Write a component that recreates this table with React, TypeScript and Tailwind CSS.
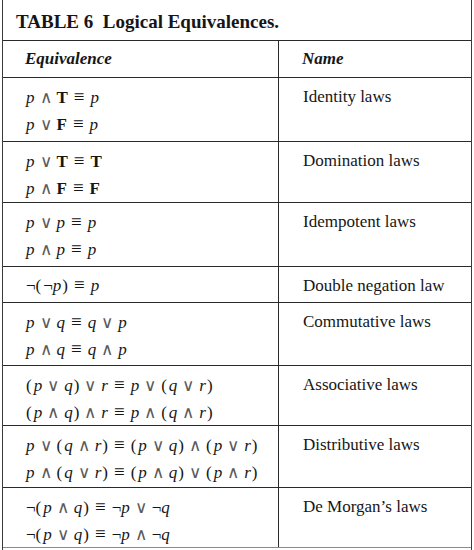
import React from 'react';

// Rows of the table: two formulas (or one) and a law name, with the row height from the scan
const rows = [
  { lines: ['p ∧ T ≡ p', 'p ∨ F ≡ p'], name: 'Identity laws', h: 'h-[64px]' },
  { lines: ['p ∨ T ≡ T', 'p ∧ F ≡ F'], name: 'Domination laws', h: 'h-[61px]' },
  { lines: ['p ∨ p ≡ p', 'p ∧ p ≡ p'], name: 'Idempotent laws', h: 'h-[64px]' },
  { lines: ['¬(¬p) ≡ p'], name: 'Double negation law', h: 'h-[36px]' },
  { lines: ['p ∨ q ≡ q ∨ p', 'p ∧ q ≡ q ∧ p'], name: 'Commutative laws', h: 'h-[63px]' },
  { lines: ['(p ∨ q) ∨ r ≡ p ∨ (q ∨ r)', '(p ∧ q) ∧ r ≡ p ∧ (q ∧ r)'], name: 'Associative laws', h: 'h-[60px]' },
  { lines: ['p ∨ (q ∧ r) ≡ (p ∨ q) ∧ (p ∨ r)', 'p ∧ (q ∨ r) ≡ (p ∧ q) ∨ (p ∧ r)'], name: 'Distributive laws', h: 'h-[62px]' },
  { lines: ['¬(p ∧ q) ≡ ¬p ∨ ¬q', '¬(p ∨ q) ≡ ¬p ∧ ¬q'], name: 'De Morgan’s laws', h: 'h-[60px]' },
];

const Formula = ({ text }: { text: string }) => {
  const chars = text.replace(/ /g, '').split('');
  return (
    <span className="whitespace-nowrap">
      {chars.map((c, i) => {
        if (c === 'p' || c === 'q' || c === 'r') return <i key={i}>{c}</i>;
        if (c === 'T' || c === 'F') return <b key={i}>{c}</b>;
        if (c === '∧' || c === '∨')
          return (
            <span key={i} className="mx-[5px] text-[17px] text-[#5a5a5a] font-['DejaVu_Sans',sans-serif] font-extralight">
              {c}
            </span>
          );
        if (c === '≡') return <span key={i} className="mx-[6px] text-[19px] leading-none">{c}</span>;
        if (c === '(') return <span key={i} className="mr-[2px]">{c}</span>;
        if (c === ')') return <span key={i} className="ml-[1px]">{c}</span>;
        return <span key={i}>{c}</span>;
      })}
    </span>
  );
};

const App = () => {
  return (
    <div
      className="w-[474px] h-[550px] bg-white text-[#161616] overflow-hidden"
      style={{ fontFamily: '"Liberation Serif", "DejaVu Serif", serif' }}
    >
      <div className="ml-[2px] w-[470px] h-full border-x-[1.5px] border-[#3a3a3a]">
        {/* Caption */}
        <div className="h-[40px] pl-[13px] pt-[10px] text-[19px] font-bold leading-[24px]">
          TABLE 6&nbsp; Logical Equivalences.
        </div>

        {/* Header */}
        <div className="flex h-[37px] border-t-[1.5px] border-[#2a2a2a] text-[17px] font-bold italic">
          <div className="w-[276px] border-r-[1.5px] border-[#2a2a2a] pl-[22px] flex items-center">Equivalence</div>
          <div className="flex-1 pl-[23px] flex items-center">Name</div>
        </div>

        {/* Body */}
        {rows.map((row, idx) => (
          <div key={idx} className={`flex ${row.h} border-t-[1.5px] border-[#2a2a2a] text-[17px] leading-[26px]`}>
            <div className="w-[276px] border-r-[1.5px] border-[#2a2a2a] pl-[23px] pt-[6px] flex flex-col">
              {row.lines.map((l, j) => (
                <Formula key={j} text={l} />
              ))}
            </div>
            <div className="flex-1 pl-[24px] pt-[6px]">{row.name}</div>
          </div>
        ))}
        <div className="border-t-[1.5px] border-[#8a8a8a]" />
      </div>
    </div>
  );
};

export default App;
